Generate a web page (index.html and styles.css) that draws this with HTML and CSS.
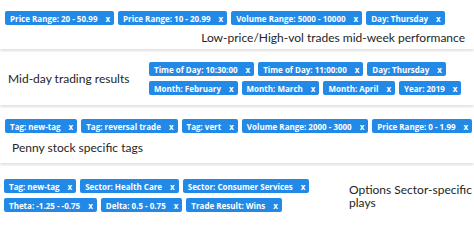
FILE: index.html
```html
<!DOCTYPE html>
<html>
<head>
<meta charset="utf-8">
<link rel="stylesheet" href="styles.css">
</head>
<body>
<div class="card c1">
  <div class="row">
    <span class="tag">Price Range: 20 - 50.99<span class="x">x</span></span>
    <span class="tag">Price Range: 10 - 20.99<span class="x">x</span></span>
    <span class="tag">Volume Range: 5000 - 10000<span class="x">x</span></span>
    <span class="tag">Day: Thursday<span class="x">x</span></span>
  </div>
  <p class="desc">Low-price/High-vol trades mid-week performance</p>
</div>
<div class="card c2">
  <p class="desc">Mid-day trading results</p>
  <div class="tags">
    <div class="row">
      <span class="tag">Time of Day: 10:30:00<span class="x">x</span></span>
      <span class="tag">Time of Day: 11:00:00<span class="x">x</span></span>
      <span class="tag">Day: Thursday<span class="x">x</span></span>
    </div>
    <div class="row">
      <span class="tag">Month: February<span class="x">x</span></span>
      <span class="tag">Month: March<span class="x">x</span></span>
      <span class="tag">Month: April<span class="x">x</span></span>
      <span class="tag">Year: 2019<span class="x">x</span></span>
    </div>
  </div>
</div>
<div class="card c3">
  <div class="row">
    <span class="tag">Tag: new-tag<span class="x">x</span></span>
    <span class="tag">Tag: reversal trade<span class="x">x</span></span>
    <span class="tag">Tag: vert<span class="x">x</span></span>
    <span class="tag">Volume Range: 2000 - 3000<span class="x">x</span></span>
    <span class="tag">Price Range: 0 - 1.99<span class="x">x</span></span>
  </div>
  <p class="desc">Penny stock specific tags</p>
</div>
<div class="card c4">
  <div class="tags">
    <div class="row">
      <span class="tag">Tag: new-tag<span class="x">x</span></span>
      <span class="tag">Sector: Health Care<span class="x">x</span></span>
      <span class="tag">Sector: Consumer Services<span class="x">x</span></span>
    </div>
    <div class="row">
      <span class="tag">Theta: -1.25 - -0.75<span class="x">x</span></span>
      <span class="tag">Delta: 0.5 - 0.75<span class="x">x</span></span>
      <span class="tag">Trade Result: Wins<span class="x">x</span></span>
    </div>
  </div>
  <p class="desc">Options Sector-specific plays</p>
</div>
</body>
</html>
```

FILE: styles.css
```css
* { box-sizing: border-box; }
body {
  margin: 0;
  background: #ffffff;
  font-family: "Open Sans", "DejaVu Sans", sans-serif;
  color: #222;
}
.card {
  background: #fff;
  box-shadow: 0 2px 3px rgba(0, 0, 0, 0.13);
  margin-bottom: 3px;
}
.tags {
  display: flex;
  flex-direction: column;
  gap: 5px;
}
.row {
  display: flex;
  gap: 4px;
}
.tag {
  display: inline-flex;
  align-items: center;
  flex: none;
  height: 14px;
  padding: 0 4px 0 5px;
  background: #2389e6;
  color: #fff;
  font-size: 8px;
  font-weight: 700;
  border-radius: 2px;
  white-space: nowrap;
}
.x {
  margin-left: 8px;
}
.desc {
  margin: 0;
  font-family: Lato, "Open Sans", sans-serif;
  font-size: 12px;
  line-height: 16px;
  color: #252525;
}
.c1 {
  height: 49px;
  padding: 11px 4px 0 5px;
}
.c1 .desc {
  margin-top: 5px;
  padding-right: 5px;
  text-align: right;
}
.c2 {
  height: 53px;
  display: flex;
  align-items: center;
  padding-left: 8px;
}
.c2 .desc {
  width: 141px;
  flex: none;
}
.c3 {
  height: 55px;
  padding: 11px 2px 0 5px;
}
.c3 .desc {
  margin-top: 7px;
  padding-left: 7px;
}
.c4 {
  display: flex;
  align-items: center;
  padding: 13px 0 34px 4px;
  box-shadow: none;
}
.c4 .tags {
  width: 300px;
  flex: none;
}
.c4 .desc {
  margin-left: 45px;
  width: 125px;
  line-height: 13px;
}
```
